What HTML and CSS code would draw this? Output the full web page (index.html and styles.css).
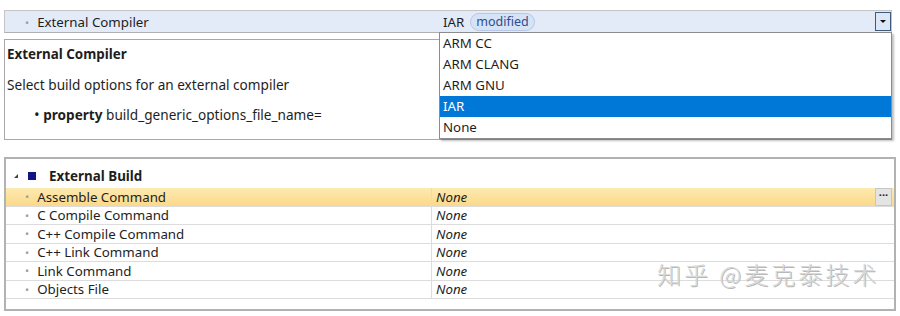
FILE: index.html
```html
<!DOCTYPE html>
<html lang="en">
<head>
    <meta charset="UTF-8">
    <title>External Compiler</title>
    <link rel="stylesheet" href="styles.css">
</head>
<body>

    <!-- Grille des propriétés (haut) -->
    <div class="top-panel">
        <div class="prop-grid">
            <div class="prop-row selected">
                <div class="prop-name"><span class="dot">•</span>External Compiler</div>
                <div class="prop-value">
                    IAR <span class="badge">modified</span>
                    <span class="drop-btn"></span>
                </div>
            </div>
        </div>

        <div class="description">
            <h3>External Compiler</h3>
            <p>Select build options for an external compiler</p>
            <p class="bullet"><span class="big-dot">•</span> <b>property</b> build_generic_options_file_name=</p>
        </div>

        <!-- Liste déroulante ouverte -->
        <ul class="dropdown">
            <li>ARM CC</li>
            <li>ARM CLANG</li>
            <li>ARM GNU</li>
            <li class="active">IAR</li>
            <li>None</li>
        </ul>
    </div>

    <!-- Section External Build -->
    <div class="build-panel">
        <div class="group-head">
            <span class="tri"></span>
            <span class="square"></span>
            <b>External Build</b>
        </div>
        <div class="build-row hot">
            <div class="prop-name"><span class="dot">•</span>Assemble Command</div>
            <div class="prop-value"><i>None</i><span class="more-btn">···</span></div>
        </div>
        <div class="build-row">
            <div class="prop-name"><span class="dot">•</span>C Compile Command</div>
            <div class="prop-value"><i>None</i></div>
        </div>
        <div class="build-row">
            <div class="prop-name"><span class="dot">•</span>C++ Compile Command</div>
            <div class="prop-value"><i>None</i></div>
        </div>
        <div class="build-row">
            <div class="prop-name"><span class="dot">•</span>C++ Link Command</div>
            <div class="prop-value"><i>None</i></div>
        </div>
        <div class="build-row">
            <div class="prop-name"><span class="dot">•</span>Link Command</div>
            <div class="prop-value"><i>None</i></div>
        </div>
        <div class="build-row">
            <div class="prop-name"><span class="dot">•</span>Objects File</div>
            <div class="prop-value"><i>None</i></div>
        </div>
        <div class="watermark">知乎 @麦克泰技术</div>
    </div>

</body>
</html>
```

FILE: styles.css
```css
/* Base */
body {
    margin: 0;
    background: #ffffff;
    font-family: "Noto Sans", "Open Sans", sans-serif;
    font-size: 13.3px;
    color: #1e1e1e;
}

/* Panneau du haut */
.top-panel {
    position: relative;
    margin: 10px 8px 0 4px;
}
.prop-grid {
    border: 1px solid #c4c4c4;
    border-bottom-color: #b0b0b0;
    margin-bottom: 6px;
}
.prop-row {
    display: flex;
    height: 21px;
    align-items: center;
}
.prop-row.selected {
    background-color: #e3eaf8;
}
.prop-name {
    width: 414px;
    padding-left: 20px;
    white-space: nowrap;
}
.dot {
    color: #a0a0a0;
    margin-right: 8px;
    font-size: 11px;
}
.prop-value {
    flex: 1;
    position: relative;
    padding-left: 4px;
    height: 100%;
    display: flex;
    align-items: center;
}
.badge {
    margin-left: 6px;
    padding: 0 5px;
    height: 16px;
    line-height: 15px;
    border: 1px solid #b7c8e6;
    border-radius: 9px;
    background-color: #d6e2f6;
    color: #2a4f8e;
    font-size: 12.5px;
}
.drop-btn {
    position: absolute;
    right: 0;
    top: 1px;
    width: 14px;
    height: 17px;
    border: 1px solid #3c5a7a;
    background-color: #dbe6f6;
}
.drop-btn::after {
    content: "";
    position: absolute;
    left: 4px;
    top: 7px;
    border-left: 3px solid transparent;
    border-right: 3px solid transparent;
    border-top: 3px solid #111;
}

/* Description */
.description {
    border: 1px solid #a8a8a8;
    height: 99px;
    padding-left: 2px;
}
.description h3 {
    margin: 3px 0 0;
    font-size: 13.4px;
    font-weight: bold;
    height: 22px;
    line-height: 22px;
}
.description p {
    margin: 9px 0 0;
    height: 21px;
    line-height: 21px;
    font-size: 13.6px;
}
.description .bullet {
    padding-left: 27px;
}
.big-dot {
    font-size: 15px;
}

/* Liste déroulante */
.dropdown {
    position: absolute;
    left: 435px;
    top: 22px;
    width: 451px;
    margin: 0;
    padding: 0;
    list-style: none;
    background: #ffffff;
    border: 1px solid #8c8c8c;
    box-shadow: 2px 2px 2px rgba(0, 0, 0, 0.25);
}
.dropdown li {
    height: 21px;
    line-height: 21px;
    padding-left: 3px;
}
.dropdown li.active {
    background-color: #0078d7;
    color: #ffffff;
}

/* Section External Build */
.build-panel {
    position: relative;
    margin: 17px 4px 0 4px;
    border: 2px solid #b2b2b2;
    height: 150px;
}
.group-head {
    display: flex;
    align-items: center;
    box-sizing: border-box;
    height: 29px;
    padding-top: 4px;
}
.group-head b {
    font-size: 13.4px;
}
.tri {
    width: 0;
    height: 0;
    margin-left: 8px;
    border-left: 4px solid transparent;
    border-bottom: 4px solid #444;
}
.square {
    width: 8px;
    height: 8px;
    margin-left: 10px;
    margin-right: 13px;
    background-color: #14148a;
}
.build-row {
    display: flex;
    align-items: center;
    height: 18.5px;
    box-sizing: border-box;
    border-bottom: 1px solid #dcdcdc;
}
.build-row.hot {
    background: linear-gradient(#fdeab0, #fbd98a);
}
.build-row .prop-name {
    width: 406px;
    padding-left: 19px;
    border-right: 1px solid #dcdcdc;
    height: 100%;
    display: flex;
    align-items: center;
}
.build-row .prop-value {
    padding-left: 4px;
}
.more-btn {
    position: absolute;
    right: 2px;
    top: 0;
    width: 15px;
    height: 16px;
    line-height: 12px;
    text-align: center;
    background-color: #e4e4e4;
    border: 1px solid #c6c6c6;
    font-size: 11px;
    font-weight: bold;
}
.watermark {
    position: absolute;
    left: 651px;
    top: 97px;
    font-family: "Noto Sans CJK SC", sans-serif;
    font-size: 24px;
    font-weight: 300;
    color: #d8d8d8;
    text-shadow: 1px 1px 0 #b8b8b8;
    letter-spacing: 3px;
}
```
